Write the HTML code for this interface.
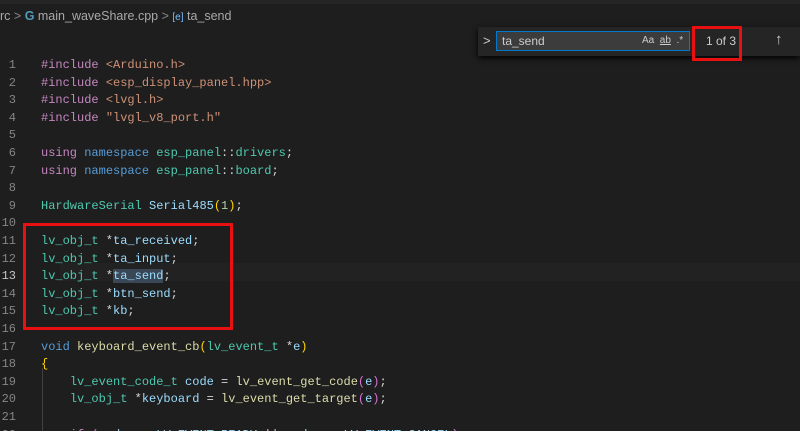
<!DOCTYPE html>
<html><head><style>
html,body{margin:0;width:800px;height:431px;overflow:hidden}
body{background:#1e1e1e;position:relative;font-family:"Liberation Sans",sans-serif}
.bc{position:absolute;top:9px;left:0;font-size:12.5px;color:#a9a9a9;white-space:nowrap}
.code{position:absolute;top:57px;left:0;font-family:"Liberation Mono",monospace;font-size:12px;line-height:17.6px;white-space:pre;color:#d4d4d4}
.ln{position:absolute;left:0;width:16px;text-align:right;color:#858585}
.tx{position:absolute;left:41px}
.p{color:#c586c0}.s{color:#ce9178}.b{color:#569cd6}.t{color:#4ec9b0}.v{color:#9cdcfe}.f{color:#dcdcaa}.y{color:#ffd700}.n{color:#b5cea8}.m{color:#da70d6}
.red{position:absolute;border:3px solid #e81010;box-sizing:border-box}
</style></head><body>
<div style="position:absolute;left:0;top:0;width:800px;height:4px;background:#252526"></div>
<div class="bc">rc <span style="color:#888">&gt;</span> <span style="color:#519aba;font-weight:bold">G</span> main_waveShare.cpp <span style="color:#888">&gt;</span> <span style="color:#75beff;font-size:10px">[e]</span> ta_send</div>
<div style="position:absolute;left:478px;top:27px;width:322px;height:29px;background:#252526;box-shadow:0 2px 6px #000"></div>
<div style="position:absolute;left:483px;top:33px;color:#ccc;font-size:13px">&gt;</div>
<div style="position:absolute;left:496px;top:31px;width:194px;height:20px;background:#3c3c3c;border:1px solid #007acc;box-sizing:border-box"></div>
<div style="position:absolute;left:502px;top:34px;color:#ccc;font-size:12px">ta_send</div>
<div style="position:absolute;left:642px;top:35px;color:#ccc;font-size:10px">Aa &nbsp;<u>ab</u> &nbsp;.*</div>
<div style="position:absolute;left:706px;top:34px;color:#ccc;font-size:12px">1 of 3</div>
<div style="position:absolute;left:775px;top:31px;color:#ccc;font-size:15px">↑</div>
<div class="red" style="left:692px;top:26px;width:50px;height:35px"></div>
<div style="position:absolute;left:60px;top:263px;width:740px;height:18px;background:#222222"></div>
<div class="code">
<div class="ln" style="top:0">1</div><div class="tx" style="top:0"><span class="p">#include</span> <span class="s">&lt;Arduino.h&gt;</span></div>
<div class="ln" style="top:17.6px">2</div><div class="tx" style="top:17.6px"><span class="p">#include</span> <span class="s">&lt;esp_display_panel.hpp&gt;</span></div>
<div class="ln" style="top:35.2px">3</div><div class="tx" style="top:35.2px"><span class="p">#include</span> <span class="s">&lt;lvgl.h&gt;</span></div>
<div class="ln" style="top:52.8px">4</div><div class="tx" style="top:52.8px"><span class="p">#include</span> <span class="s">"lvgl_v8_port.h"</span></div>
<div class="ln" style="top:70.4px">5</div>
<div class="ln" style="top:88px">6</div><div class="tx" style="top:88px"><span class="p">using</span> <span class="b">namespace</span> <span class="t">esp_panel</span>::<span class="t">drivers</span>;</div>
<div class="ln" style="top:105.6px">7</div><div class="tx" style="top:105.6px"><span class="p">using</span> <span class="b">namespace</span> <span class="t">esp_panel</span>::<span class="t">board</span>;</div>
<div class="ln" style="top:123.2px">8</div>
<div class="ln" style="top:140.8px">9</div><div class="tx" style="top:140.8px"><span class="t">HardwareSerial</span> <span class="v">Serial485</span><span class="y">(</span><span class="n">1</span><span class="y">)</span>;</div>
<div class="ln" style="top:158.4px">10</div>
<div class="ln" style="top:176px">11</div><div class="tx" style="top:176px"><span class="t">lv_obj_t</span> *<span class="v">ta_received</span>;</div>
<div class="ln" style="top:193.6px">12</div><div class="tx" style="top:193.6px"><span class="t">lv_obj_t</span> *<span class="v">ta_input</span>;</div>
<div class="ln" style="top:211.2px;color:#c6c6c6">13</div><div class="tx" style="top:211.2px"><span class="t">lv_obj_t</span> *<span class="v" style="background:#3a4756">ta_send</span>;</div>
<div class="ln" style="top:228.8px">14</div><div class="tx" style="top:228.8px"><span class="t">lv_obj_t</span> *<span class="v">btn_send</span>;</div>
<div class="ln" style="top:246.4px">15</div><div class="tx" style="top:246.4px"><span class="t">lv_obj_t</span> *<span class="v">kb</span>;</div>
<div class="ln" style="top:264px">16</div>
<div class="ln" style="top:281.6px">17</div><div class="tx" style="top:281.6px"><span class="b">void</span> <span class="f">keyboard_event_cb</span><span class="y">(</span><span class="t">lv_event_t</span> *<span class="v">e</span><span class="y">)</span></div>
<div class="ln" style="top:299.2px">18</div><div class="tx" style="top:299.2px"><span class="y">{</span></div>
<div class="ln" style="top:316.8px">19</div><div class="tx" style="top:316.8px">    <span class="t">lv_event_code_t</span> <span class="v">code</span> = <span class="f">lv_event_get_code</span><span class="m">(</span><span class="v">e</span><span class="m">)</span>;</div>
<div class="ln" style="top:334.4px">20</div><div class="tx" style="top:334.4px">    <span class="t">lv_obj_t</span> *<span class="v">keyboard</span> = <span class="f">lv_event_get_target</span><span class="m">(</span><span class="v">e</span><span class="m">)</span>;</div>
<div class="ln" style="top:352px">21</div>
<div class="ln" style="top:369.6px">22</div><div class="tx" style="top:369.6px">    <span class="p">if</span> <span class="m">(</span><span class="v">code</span> == <span class="v">LV_EVENT_READY</span> || <span class="v">code</span> == <span class="v">LV_EVENT_CANCEL</span><span class="m">)</span></div>
</div>
<div style="position:absolute;left:42px;top:368px;width:1px;height:63px;background:#404040"></div>
<div class="red" style="left:23px;top:223px;width:210px;height:107px"></div>
</body></html>
